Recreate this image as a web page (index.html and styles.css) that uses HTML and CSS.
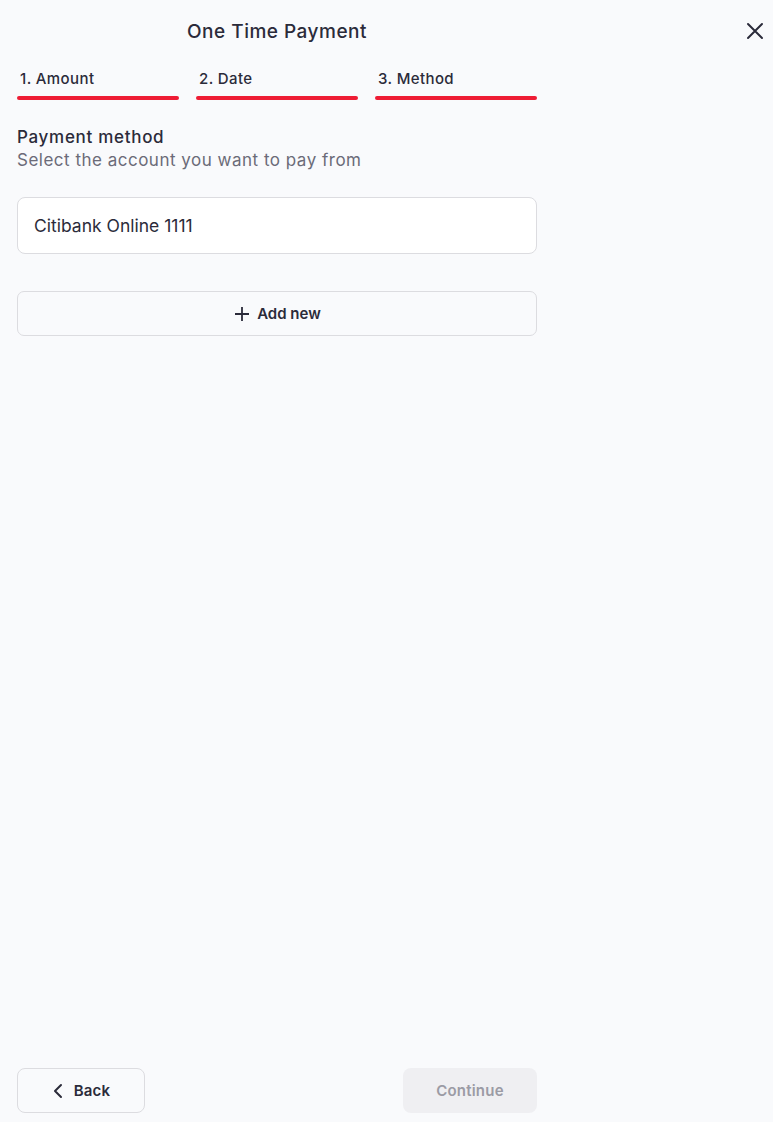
FILE: index.html
```html
<!DOCTYPE html>
<html lang="en">
<head>
  <meta charset="UTF-8" />
  <title>One Time Payment</title>
  <link rel="stylesheet" href="styles.css">
</head>
<body>
  <div class="page">
    <header class="top">
      <h1 class="title">One Time Payment</h1>
      <button class="close-btn" aria-label="Close">
        <svg width="20" height="20" viewBox="0 0 20 20"><path d="M3 3 L17 17 M17 3 L3 17" stroke="#2b2b3a" stroke-width="2" stroke-linecap="round" fill="none"/></svg>
      </button>
    </header>

    <nav class="steps">
      <div class="step"><span>1. Amount</span><i></i></div>
      <div class="step"><span>2. Date</span><i></i></div>
      <div class="step"><span>3. Method</span><i></i></div>
    </nav>

    <section class="content">
      <h2>Payment method</h2>
      <p class="sub">Select the account you want to pay from</p>

      <div class="account">Citibank Online 1111</div>

      <button class="add-btn">
        <svg width="18" height="18" viewBox="0 0 18 18"><path d="M9 2 V16 M2 9 H16" stroke="#2b2b3a" stroke-width="1.8" fill="none"/></svg>
        Add new
      </button>
    </section>

    <footer class="actions">
      <button class="back-btn">
        <svg width="14" height="16" viewBox="0 0 14 16"><path d="M9 2 L3 8 L9 14" stroke="#2b2b3a" stroke-width="2" stroke-linecap="round" stroke-linejoin="round" fill="none"/></svg>
        Back
      </button>
      <button class="continue-btn" disabled>Continue</button>
    </footer>
  </div>
</body>
</html>
```

FILE: styles.css
```css
html, body {
  margin: 0;
  padding: 0;
  background: #f9fafc;
  font-family: Inter, "Noto Sans", sans-serif;
  color: #2b2b3a;
}

.page {
  min-height: 100vh;
  display: flex;
  flex-direction: column;
  box-sizing: border-box;
  padding-bottom: 9px;
}

button {
  font-family: inherit;
  cursor: pointer;
}

/* header */
.top {
  height: 62px;
  display: flex;
  align-items: center;
}
.title {
  width: 520px;
  margin: 0 0 0 17px;
  text-align: center;
  font-size: 19px;
  font-weight: 500;
  letter-spacing: 0.5px;
}
.close-btn {
  margin-left: auto;
  margin-right: 6px;
  width: 24px;
  height: 24px;
  padding: 2px;
  border: none;
  background: none;
  display: flex;
}

/* steps */
.steps {
  width: 520px;
  margin: 7px 0 0 17px;
  display: flex;
  gap: 17px;
}
.step {
  flex: 1;
  display: flex;
  flex-direction: column;
  gap: 7px;
}
.step span {
  padding-left: 3px;
  font-size: 15px;
  line-height: 20px;
  font-weight: 500;
  letter-spacing: 0.4px;
}
.step i {
  display: block;
  height: 4px;
  border-radius: 2px;
  background: #ee1c34;
}

/* content */
.content {
  width: 520px;
  margin: 26px 0 0 17px;
  flex: 1;
}
.content h2 {
  margin: 0;
  font-size: 17px;
  line-height: 22px;
  font-weight: 500;
  letter-spacing: 0.7px;
}
.sub {
  margin: 0;
  font-size: 17px;
  line-height: 24px;
  letter-spacing: 0.5px;
  color: #6b6b78;
}
.account {
  margin-top: 25px;
  height: 57px;
  box-sizing: border-box;
  padding: 0 16px;
  display: flex;
  align-items: center;
  background: #fff;
  border: 1px solid #dcdce0;
  border-radius: 8px;
  font-size: 17.5px;
}
.add-btn {
  margin-top: 37px;
  width: 100%;
  height: 45px;
  display: flex;
  align-items: center;
  justify-content: center;
  gap: 6px;
  background: transparent;
  border: 1px solid #dcdce0;
  border-radius: 7px;
  color: #2b2b3a;
  font-size: 15px;
  font-weight: 600;
}

/* footer */
.actions {
  width: 520px;
  margin-left: 17px;
  display: flex;
  justify-content: space-between;
}
.back-btn {
  width: 128px;
  height: 45px;
  display: flex;
  align-items: center;
  justify-content: center;
  gap: 8px;
  background: transparent;
  border: 1px solid #dcdce0;
  border-radius: 8px;
  color: #2b2b3a;
  font-size: 15px;
  font-weight: 600;
  letter-spacing: 0.2px;
}
.continue-btn {
  width: 134px;
  height: 45px;
  background: #efeff2;
  border: none;
  border-radius: 8px;
  color: #9b9ba5;
  font-size: 15px;
  font-weight: 600;
  letter-spacing: 0.2px;
  cursor: default;
}
```
